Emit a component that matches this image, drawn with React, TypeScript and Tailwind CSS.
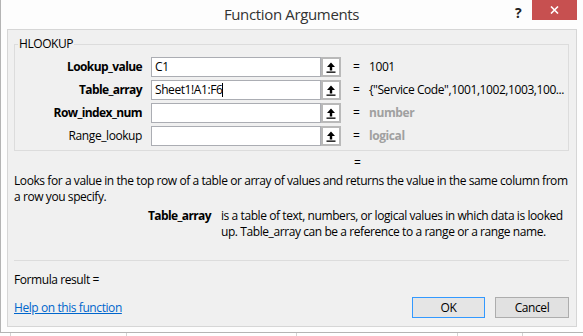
import React from 'react';

interface Arg {
  name: string;
  value: string;
  result: string;
  required: boolean;
  cursor?: boolean;
}

const args: Arg[] = [
  { name: 'Lookup_value', value: 'C1', result: '1001', required: true },
  { name: 'Table_array', value: 'Sheet1!A1:F6', result: '{"Service Code",1001,1002,1003,100...', required: true, cursor: true },
  { name: 'Row_index_num', value: '', result: 'number', required: true },
  { name: 'Range_lookup', value: '', result: 'logical', required: false },
];

function CollapseIcon() {
  return (
    <svg width="10" height="11" viewBox="0 0 10 11">
      <path d="M5 0.5 L9 5 L6.2 5 L6.2 8.5 L3.8 8.5 L3.8 5 L1 5 Z" fill="#000" />
      <rect x="0.5" y="9.5" width="9" height="1.3" fill="#000" />
    </svg>
  );
}

export default function App(): React.ReactNode {
  return (
    <div className="w-[583px] h-[336px] overflow-hidden bg-white text-[12px] text-black" style={{ fontFamily: '"Open Sans", "Noto Sans", sans-serif' }}>
      {/* Dialog window */}
      <div className="h-[333px] bg-[#fdfdfd] border-l border-b border-[#b4b4b4] pl-[6px] flex flex-col">
        {/* Title bar */}
        <div className="relative h-[29px] flex items-center justify-center -ml-[7px]">
          <span className="text-[15px] text-[#333] tracking-[-0.35px]">Function Arguments</span>
          <span className="absolute left-[515px] top-[2px] text-[14px] font-bold text-[#222]">?</span>
          <div className="absolute left-[532px] top-0 w-[45px] h-[20px] bg-[#c75050] flex items-center justify-center">
            <svg width="9" height="8" viewBox="0 0 9 8">
              <path d="M1 0.5 L8 7.5 M8 0.5 L1 7.5" stroke="#fff" strokeWidth="1.6" />
            </svg>
          </div>
        </div>

        {/* Body */}
        <div className="w-[570px] h-[298px] bg-[#f0f0f0] border border-[#d6d6d6] pt-[6px] pl-[6px] pr-[7px] flex flex-col tracking-[-0.42px]">
          <fieldset className="border border-[#dcdcdc] pt-[5px] pb-[4px]">
            <legend className="ml-[3px] px-[1px] leading-[16px]">HLOOKUP</legend>
            <div className="flex flex-col gap-[3px]">
              {args.map((a) => (
                <div key={a.name} className="flex items-center h-[20px]">
                  <span className={`w-[127px] text-right ${a.required ? 'font-bold tracking-[-0.6px]' : ''}`}>{a.name}</span>
                  <div className="ml-[9px] w-[170px] h-[20px] bg-white border border-[#abadb3] pl-[3px] flex items-center">
                    <span>{a.value}</span>
                    {a.cursor && <span className="w-px h-[14px] bg-black" />}
                  </div>
                  <div className="w-[20px] h-[20px] bg-white border-2 border-[#b9b9b9] flex items-center justify-center">
                    <CollapseIcon />
                  </div>
                  <span className="ml-[12px] w-[16px]">=</span>
                  <span className={a.value ? '' : 'font-bold text-[#a0a0a0]'}>{a.result}</span>
                </div>
              ))}
            </div>
          </fieldset>

          <div className="mt-[4px] h-[15px] leading-[15px] pl-[340px]">=</div>

          <div className="mt-[3px] leading-[16px]">
            <div className="whitespace-nowrap">Looks for a value in the top row of a table or array of values and returns the value in the same column from</div>
            <div>a row you specify.</div>
          </div>

          <div className="mt-[3px] flex leading-[16px]">
            <span className="w-[197px] text-right font-bold tracking-[-0.6px]">Table_array</span>
            <div className="ml-[10px]">
              <div className="whitespace-nowrap">is a table of text, numbers, or logical values in which data is looked</div>
              <div className="whitespace-nowrap">up. Table_array can be a reference to a range or a range name.</div>
            </div>
          </div>

          <div className="mt-[20px] h-px bg-[#dcdcdc]" />

          <div className="mt-[11px] h-[16px] leading-[16px]">Formula result =</div>

          <div className="mt-[9px] h-[21px] flex items-center">
            <a href="#" className="text-[#0066cc] underline">Help on this function</a>
            <div className="ml-auto flex gap-[10px]">
              <button className="w-[73px] h-[21px] bg-[#e5e5e5] border border-[#3399ff] flex items-center justify-center">OK</button>
              <button className="w-[74px] h-[21px] bg-[#e1e1e1] border border-[#adadad] flex items-center justify-center">Cancel</button>
            </div>
          </div>
        </div>
      </div>

      {/* Worksheet grid behind the dialog */}
      <div className="h-[3px] flex">
        <div className="w-[10px]" />
        <div className="w-[116px] border-l border-[#d4d4d4]" />
        <div className="w-[170px] border-l border-[#d4d4d4]" />
        <div className="w-[161px] border-l border-[#d4d4d4]" />
        <div className="w-[65px] border-l border-[#d4d4d4]" />
        <div className="flex-1 border-l border-[#d4d4d4]" />
      </div>
    </div>
  );
}
